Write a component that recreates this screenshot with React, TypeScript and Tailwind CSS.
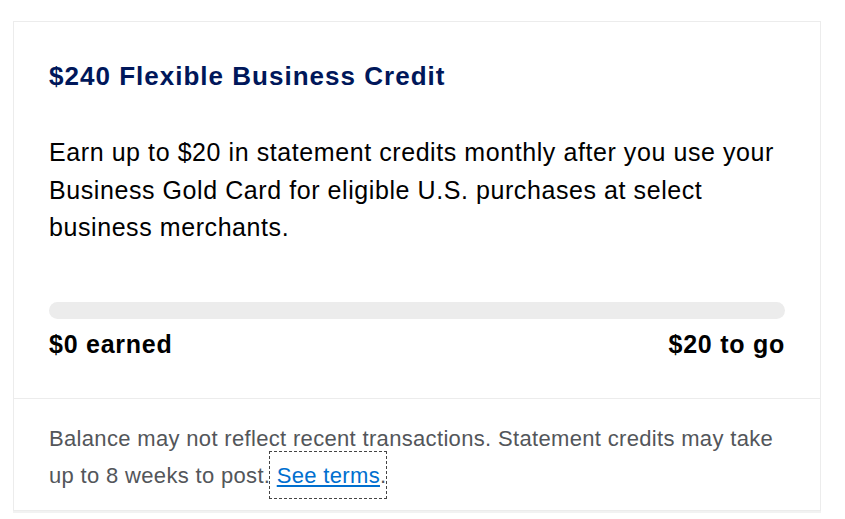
export default function App() {
  return (
    <div className="min-h-screen bg-white pt-[21px] pl-[13px] font-['Liberation_Sans',Arial,sans-serif]">
      <div className="w-[808px] border border-[#ececec] bg-white shadow-[0_2px_0_rgba(0,0,0,0.05)]">
        {/* benefit summary */}
        <div className="px-[35px] pt-[38px] pb-[38px]">
          <h2 className="text-[26px] font-bold leading-[32px] tracking-[0.039em] text-[#00175a]">
            $240 Flexible Business Credit
          </h2>
          <p className="mt-[42px] text-[25px] leading-[37.5px] tracking-[0.023em] text-black">
            Earn up to $20 in statement credits monthly after you use your Business Gold Card for
            eligible U.S. purchases at select business merchants.
          </p>
          <div className="mt-[55px] h-[17px] w-full rounded-full bg-[#ececec]" />
          <div className="mt-[9px] flex justify-between text-[25px] font-bold leading-[32px] tracking-[0.03em] text-black">
            <span>$0 earned</span>
            <span>$20 to go</span>
          </div>
        </div>

        {/* disclaimer */}
        <div className="border-t border-[#ececec] px-[35px] pt-[21px] pb-[15px]">
          <p className="text-[22px] leading-[37.5px] tracking-[0.015em] text-[#53565a]">
            Balance may not reflect recent transactions. Statement credits may take up to 8 weeks
            to post.
            <span className="pt-[11px] pb-[10px] outline outline-1 outline-dashed outline-[#444]">
              {" "}
              <a
                href="#"
                className="text-[#006fcf] underline decoration-2 underline-offset-[2px]"
              >
                See terms
              </a>
              .
            </span>
          </p>
        </div>
      </div>
    </div>
  );
}
